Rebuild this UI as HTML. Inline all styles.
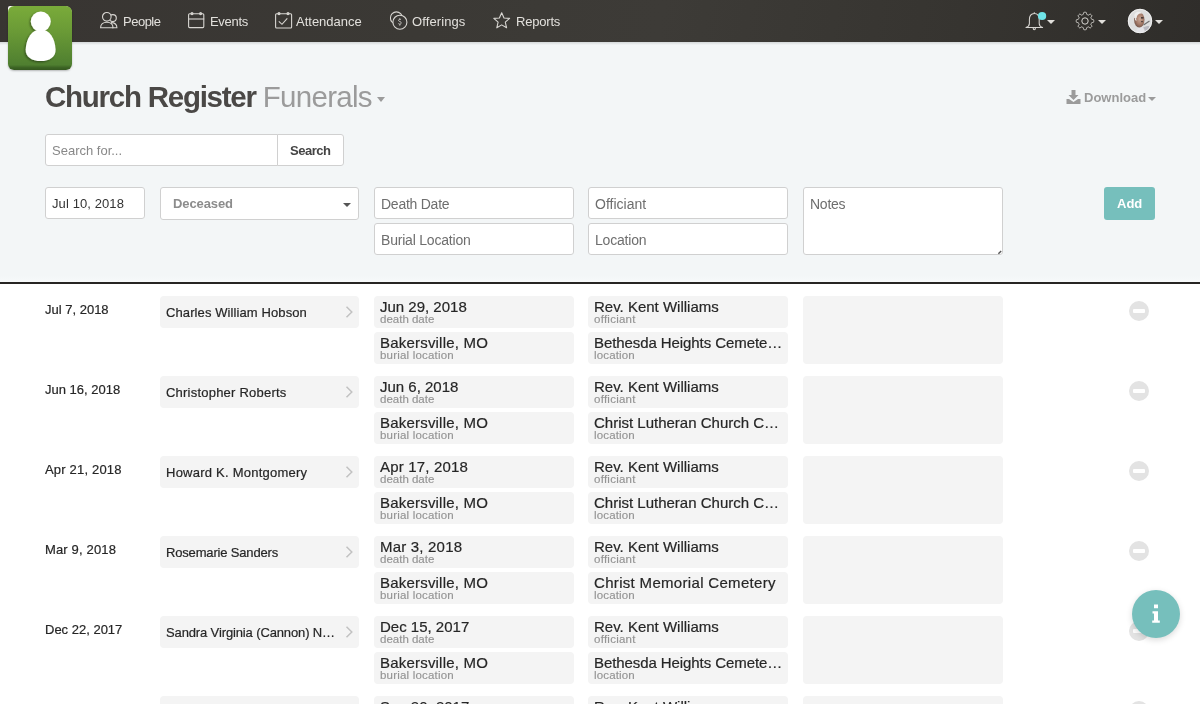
<!DOCTYPE html>
<html><head><meta charset="utf-8">
<style>
*{box-sizing:border-box;margin:0;padding:0}
body *{will-change:transform}
html,body{width:1200px;height:704px;overflow:hidden;background:#fff;font-family:"Liberation Sans",sans-serif;color:#333}
#nav{position:absolute;left:0;top:0;width:1200px;height:42px;background:linear-gradient(100deg,#383532 0%,#3b3935 35%,#3d3b37 55%,#363430 80%,#2f2d2a 100%)}
#navshadow{position:absolute;left:0;top:42px;width:1200px;height:3px;background:linear-gradient(#d3d7d8,#f3f6f7)}
#head{position:absolute;left:0;top:42px;width:1200px;height:240px;background:linear-gradient(#f3f6f7 0,#f3f6f7 234px,#f7f9fa 240px)}
#rule{position:absolute;left:0;top:282px;width:1200px;height:2px;background:#272523}
#logo{position:absolute;left:8px;top:6px;width:64px;height:64px;border-radius:6px;background:linear-gradient(#7aab3a 0%,#6a9a36 40%,#4f7f30 92%,#3c6424 96%,#34581f 100%);box-shadow:0 1px 2px rgba(0,0,0,.25)}
.nav-item{position:absolute;top:0;height:42px;font-size:13px;color:#e2e0dc;white-space:nowrap}
.nav-item svg{position:absolute}
.nav-item span{position:absolute;top:14px}
.title{position:absolute;left:45px;top:80px;font-size:29.5px;letter-spacing:-1.25px;font-weight:bold;color:#4a4846;white-space:nowrap;line-height:34px}
.title span{font-weight:normal;color:#9b9b9b;letter-spacing:-0.7px}
.inp{position:absolute;background:#fff;border:1px solid #d0d0d0;border-radius:3px;font-size:14px;color:#6e6e6e;padding-left:7px;white-space:nowrap}
.inp span{position:absolute;top:8px;left:6px}
.btn{position:absolute;background:#fff;border:1px solid #d0d0d0;font-size:14px;font-weight:bold;color:#444;white-space:nowrap}
.box{position:absolute;background:#f4f4f4;border-radius:4px;white-space:nowrap;overflow:hidden}
.box .v{position:absolute;left:6px;top:1.5px;font-size:15px;color:#262626;-webkit-text-stroke:0.2px #262626}
.box .l{position:absolute;left:6px;top:17px;font-size:11.5px;color:#939393;-webkit-text-stroke:0.15px #939393}
.date{position:absolute;left:45px;font-size:13px;color:#262626;margin-top:6px;-webkit-text-stroke:0.2px #262626}
.name{position:absolute;left:160px;width:199px;height:32px;background:#f4f4f4;border-radius:4px;font-size:13px;color:#333;white-space:nowrap}
.name .nt{position:absolute;left:6px;top:8.5px;color:#262626;-webkit-text-stroke:0.2px #262626}
.name svg{position:absolute;left:345px;top:10px;margin-left:-160px}
.minus{position:absolute;left:1129px;width:20px;height:20px;border-radius:50%;background:#e3e3e3}
.minus:after{content:"";position:absolute;left:4px;top:8px;width:12px;height:4px;background:#fff;border-radius:1px}
#info{position:absolute;left:1132px;top:590px;width:48px;height:48px;border-radius:50%;background:#76bfbc;box-shadow:0 2px 6px rgba(0,0,0,.15)}
.caret{position:absolute;width:0;height:0;border-left:4px solid transparent;border-right:4px solid transparent;border-top:4px solid #e2e0dc}
</style></head><body>
<div id="head"></div>
<div id="navshadow"></div>
<div id="nav"></div>
<div id="rule"></div>
<div style="position:absolute;left:8px;top:6px;width:64px;height:64px;border-radius:2px 7px 2px 7px;background:#fff"></div>
<div id="logo">
<svg width="64" height="64" viewBox="0 0 64 64" style="position:absolute;left:0;top:0">
<defs><filter id="fs" x="-20%" y="-20%" width="140%" height="140%"><feGaussianBlur in="SourceAlpha" stdDeviation="0.8"/><feOffset dx="-0.6" dy="0.8"/><feComponentTransfer><feFuncA type="linear" slope="0.45"/></feComponentTransfer><feMerge><feMergeNode/><feMergeNode in="SourceGraphic"/></feMerge></filter></defs>
<g filter="url(#fs)" fill="#fff">
<circle cx="32.8" cy="15.6" r="10"/>
<path d="M32.7 23.4 C24 23.4 18.2 32 17.7 43.5 C17.4 51 24 55.1 32.7 55.1 C41.5 55.1 47.9 51 47.6 43.5 C47.1 32 41.5 23.4 32.7 23.4Z"/>
</g>
</svg>
</div>

<div class="nav-item" style="left:100px">
<svg width="18" height="17" viewBox="0 0 18 17" style="left:0;top:12px"><g stroke="#d8d6d2" stroke-width="1.1"><circle cx="12.8" cy="6.1" r="3.5" fill="none"/><path d="M11 10.6 C14.8 10.6 16.9 12.4 16.9 15.7 H12" fill="none"/><circle cx="6.8" cy="4.8" r="4.3" fill="#3a3835"/><path d="M0.6 15.7 C0.6 12.2 3 10.2 6.8 10.2 C10.6 10.2 13 12.2 13 15.7 Z" fill="#3a3835"/></g></svg>
<span style="left:23px;letter-spacing:-0.5px">People</span></div>

<div class="nav-item" style="left:188px">
<svg width="18" height="17" viewBox="0 0 18 17" style="left:0;top:12px"><g fill="none" stroke="#d8d6d2" stroke-width="1.1"><rect x="0.6" y="1.8" width="15.2" height="13.8" rx="1"/><path d="M0.6 7 H16.2"/><circle cx="4" cy="1.6" r="1"/><circle cx="12.6" cy="1.6" r="1"/></g></svg>
<span style="left:22px;letter-spacing:-0.3px">Events</span></div>

<div class="nav-item" style="left:275px">
<svg width="18" height="17" viewBox="0 0 18 17" style="left:0;top:12px"><g fill="none" stroke="#d8d6d2" stroke-width="1.1"><rect x="0.6" y="1.8" width="16" height="14.2" rx="1"/><circle cx="4" cy="1.6" r="1"/><circle cx="13" cy="1.6" r="1"/><path d="M3.8 9.3 L7 12.3 L12.3 6.3"/></g></svg>
<span style="left:21px">Attendance</span></div>

<div class="nav-item" style="left:390px">
<svg width="19" height="20" viewBox="0 0 19 20" style="left:0;top:11px"><g stroke="#d8d6d2" stroke-width="1.1"><circle cx="6.4" cy="6.9" r="6" fill="none"/><circle cx="9.9" cy="11.2" r="7" fill="#3a3835"/></g><path d="M11 8.8 C10.6 8.2 9 8 8.6 9 C8.3 9.9 9.3 10.4 10 10.6 C10.9 10.9 11.5 11.5 11.1 12.5 C10.7 13.4 9 13.3 8.4 12.6 M9.8 7.3 V8.3 M9.8 13.3 V14.6" fill="none" stroke="#d8d6d2" stroke-width="0.9"/></svg>
<span style="left:22px;letter-spacing:0.1px">Offerings</span></div>

<div class="nav-item" style="left:493px">
<svg width="18" height="17" viewBox="0 0 18 17" style="left:0;top:12px"><path d="M8.7 0.8 L11 6 L16.6 6.4 L12.3 10.2 L13.6 15.8 L8.7 12.9 L3.8 15.8 L5.1 10.2 L0.8 6.4 L6.4 6Z" fill="none" stroke="#d8d6d2" stroke-width="1.1" stroke-linejoin="round"/></svg>
<span style="left:23px;letter-spacing:-0.2px">Reports</span></div>

<!-- right icons -->
<svg width="24" height="22" viewBox="0 0 24 22" style="position:absolute;left:1025px;top:11px"><g fill="none" stroke="#d8d6d2" stroke-width="1.05" stroke-linejoin="round"><path d="M9.3 2.4 C6 2.4 4.4 5 4.4 8.6 V12.6 C4.4 14.6 3 15.8 1 16.5 H17.6 C15.6 15.8 14.2 14.6 14.2 12.6 V8.6 C14.2 5 12.6 2.4 9.3 2.4Z M9.3 2.4 V1.2"/><circle cx="9.3" cy="17.6" r="1.1"/></g><circle cx="17.1" cy="5" r="4.1" fill="#6fe4e8"/></svg>
<div class="caret" style="left:1047px;top:20px"></div>
<svg width="20" height="20" viewBox="0 0 20 20" style="position:absolute;left:1075.3px;top:10.7px"><g fill="none" stroke="#d8d6d2" stroke-width="1.0"><circle cx="10" cy="10" r="3.2"/><path d="M10.00 1.25 L10.23 1.25 L10.46 1.27 L10.69 1.29 L10.91 1.33 L11.13 1.41 L11.33 1.62 L11.47 2.08 L11.55 2.72 L11.64 3.18 L11.77 3.39 L11.93 3.50 L12.09 3.57 L12.25 3.63 L12.42 3.70 L12.58 3.76 L12.75 3.83 L12.91 3.90 L13.07 3.98 L13.24 4.04 L13.42 4.08 L13.67 4.02 L14.05 3.76 L14.56 3.36 L14.99 3.14 L15.27 3.13 L15.49 3.22 L15.68 3.35 L15.85 3.50 L16.02 3.65 L16.19 3.81 L16.35 3.98 L16.50 4.15 L16.65 4.32 L16.78 4.51 L16.87 4.73 L16.86 5.01 L16.64 5.44 L16.24 5.95 L15.98 6.33 L15.92 6.58 L15.96 6.76 L16.02 6.93 L16.10 7.09 L16.17 7.25 L16.24 7.42 L16.30 7.58 L16.37 7.75 L16.43 7.91 L16.50 8.07 L16.61 8.23 L16.82 8.36 L17.28 8.45 L17.92 8.53 L18.38 8.67 L18.59 8.87 L18.67 9.09 L18.71 9.31 L18.73 9.54 L18.75 9.77 L18.75 10.00 L18.75 10.23 L18.73 10.46 L18.71 10.69 L18.67 10.91 L18.59 11.13 L18.38 11.33 L17.92 11.47 L17.28 11.55 L16.82 11.64 L16.61 11.77 L16.50 11.93 L16.43 12.09 L16.37 12.25 L16.30 12.42 L16.24 12.58 L16.17 12.75 L16.10 12.91 L16.02 13.07 L15.96 13.24 L15.92 13.42 L15.98 13.67 L16.24 14.05 L16.64 14.56 L16.86 14.99 L16.87 15.27 L16.78 15.49 L16.65 15.68 L16.50 15.85 L16.35 16.02 L16.19 16.19 L16.02 16.35 L15.85 16.50 L15.68 16.65 L15.49 16.78 L15.27 16.87 L14.99 16.86 L14.56 16.64 L14.05 16.24 L13.67 15.98 L13.42 15.92 L13.24 15.96 L13.07 16.02 L12.91 16.10 L12.75 16.17 L12.58 16.24 L12.42 16.30 L12.25 16.37 L12.09 16.43 L11.93 16.50 L11.77 16.61 L11.64 16.82 L11.55 17.28 L11.47 17.92 L11.33 18.38 L11.13 18.59 L10.91 18.67 L10.69 18.71 L10.46 18.73 L10.23 18.75 L10.00 18.75 L9.77 18.75 L9.54 18.73 L9.31 18.71 L9.09 18.67 L8.87 18.59 L8.67 18.38 L8.53 17.92 L8.45 17.28 L8.36 16.82 L8.23 16.61 L8.07 16.50 L7.91 16.43 L7.75 16.37 L7.58 16.30 L7.42 16.24 L7.25 16.17 L7.09 16.10 L6.93 16.02 L6.76 15.96 L6.58 15.92 L6.33 15.98 L5.95 16.24 L5.44 16.64 L5.01 16.86 L4.73 16.87 L4.51 16.78 L4.32 16.65 L4.15 16.50 L3.98 16.35 L3.81 16.19 L3.65 16.02 L3.50 15.85 L3.35 15.68 L3.22 15.49 L3.13 15.27 L3.14 14.99 L3.36 14.56 L3.76 14.05 L4.02 13.67 L4.08 13.42 L4.04 13.24 L3.98 13.07 L3.90 12.91 L3.83 12.75 L3.76 12.58 L3.70 12.42 L3.63 12.25 L3.57 12.09 L3.50 11.93 L3.39 11.77 L3.18 11.64 L2.72 11.55 L2.08 11.47 L1.62 11.33 L1.41 11.13 L1.33 10.91 L1.29 10.69 L1.27 10.46 L1.25 10.23 L1.25 10.00 L1.25 9.77 L1.27 9.54 L1.29 9.31 L1.33 9.09 L1.41 8.87 L1.62 8.67 L2.08 8.53 L2.72 8.45 L3.18 8.36 L3.39 8.23 L3.50 8.07 L3.57 7.91 L3.63 7.75 L3.70 7.58 L3.76 7.42 L3.83 7.25 L3.90 7.09 L3.98 6.93 L4.04 6.76 L4.08 6.58 L4.02 6.33 L3.76 5.95 L3.36 5.44 L3.14 5.01 L3.13 4.73 L3.22 4.51 L3.35 4.32 L3.50 4.15 L3.65 3.98 L3.81 3.81 L3.98 3.65 L4.15 3.50 L4.32 3.35 L4.51 3.22 L4.73 3.13 L5.01 3.14 L5.44 3.36 L5.95 3.76 L6.33 4.02 L6.58 4.08 L6.76 4.04 L6.93 3.98 L7.09 3.90 L7.25 3.83 L7.42 3.76 L7.58 3.70 L7.75 3.63 L7.91 3.57 L8.07 3.50 L8.23 3.39 L8.36 3.18 L8.45 2.72 L8.53 2.08 L8.67 1.62 L8.87 1.41 L9.09 1.33 L9.31 1.29 L9.54 1.27 L9.77 1.25Z" stroke-linejoin="round"/></g></svg>
<div class="caret" style="left:1098px;top:20px"></div>
<svg width="26" height="26" viewBox="0 0 26 26" style="position:absolute;left:1127px;top:8px">
<defs><clipPath id="avc"><circle cx="13" cy="13" r="11.6"/></clipPath>
<radialGradient id="fg" cx="0.55" cy="0.45" r="0.6"><stop offset="0" stop-color="#c9a999"/><stop offset="0.6" stop-color="#a47a68"/><stop offset="1" stop-color="#6e5248"/></radialGradient></defs>
<circle cx="13" cy="13" r="12" fill="#e6e6e6"/>
<g clip-path="url(#avc)">
<rect x="0" y="0" width="26" height="26" fill="#dedede"/>
<path d="M14 26 C14 20 17 18 22 18 L26 26Z" fill="#b9b9c0"/>
<path d="M9 26 C9 21 11 19 14 19 C17 19 18 22 18 26Z" fill="#e4e4e8"/>
<ellipse cx="12.3" cy="11.8" rx="5.2" ry="7.6" fill="url(#fg)"/>
<path d="M7.2 10 C7 5.5 9 3.8 12 3.8 C13.5 3.8 14.5 4.5 15 5.5 C12 5 10 6.5 9.5 10Z" fill="#eeeeee"/>
<path d="M8 12 C8 9 8.5 7 10 6 C9 8 9 10 9.5 13Z" fill="#e8e8e8"/>
<rect x="14" y="9" width="2.6" height="1.6" fill="#4a3a35"/>
<rect x="14" y="13" width="2" height="1.2" fill="#5a4a45"/>
<path d="M16.5 17 L22.5 13" stroke="#6d6d6d" stroke-width="1.1"/>
</g>
<circle cx="13" cy="13" r="11.8" fill="none" stroke="#f0f0f0" stroke-width="0.9"/>
</svg>
<div class="caret" style="left:1155px;top:20px"></div>

<div class="title">Church Register <span>Funerals</span></div>
<div class="caret" style="left:377px;top:97px;border-left-width:4.5px;border-right-width:4.5px;border-top:5px solid #9b9b9b"></div>

<!-- download -->
<svg width="15" height="14" viewBox="0 0 15 14" style="position:absolute;left:1066px;top:90px"><path d="M5.5 0 H9.5 V5 H12.5 L7.5 10 L2.5 5 H5.5Z M0.5 9 H3 L7.5 12 L12 9 H14.5 V14 H0.5Z" fill="#9b9b9b"/></svg>
<div style="position:absolute;left:1084px;top:90px;font-size:13px;font-weight:bold;color:#9b9b9b;white-space:nowrap">Download</div>
<div class="caret" style="left:1148px;top:97px;border-top-color:#9b9b9b"></div>

<!-- search -->
<div class="inp" style="left:45px;top:134px;width:233px;height:32px;border-radius:3px 0 0 3px;color:#888;font-size:13px"><span>Search for...</span></div>
<div class="btn" style="left:277px;top:134px;width:67px;height:32px;border-radius:0 3px 3px 0"><span style="position:absolute;left:12px;top:8px;font-size:13px;letter-spacing:-0.5px">Search</span></div>

<!-- form -->
<div class="inp" style="left:45px;top:187px;width:100px;height:32px;color:#333;font-size:13px"><span style="letter-spacing:0.1px">Jul 10, 2018</span></div>
<div class="inp" style="left:160px;top:187px;width:199px;height:33px;color:#8c8c8c;font-weight:bold"><span style="left:11.5px;font-size:13px;letter-spacing:-0.1px">Deceased</span><div class="caret" style="left:182px;top:15px;border-top-color:#555"></div></div>
<div class="inp" style="left:374px;top:187px;width:200px;height:32px"><span style="letter-spacing:-0.25px">Death Date</span></div>
<div class="inp" style="left:374px;top:223px;width:200px;height:32px"><span style="letter-spacing:-0.2px">Burial Location</span></div>
<div class="inp" style="left:588px;top:187px;width:200px;height:32px"><span>Officiant</span></div>
<div class="inp" style="left:588px;top:223px;width:200px;height:32px"><span style="letter-spacing:-0.2px">Location</span></div>
<div class="inp" style="left:803px;top:187px;width:200px;height:68px"><span style="letter-spacing:-0.25px">Notes</span>
<svg width="6" height="6" viewBox="0 0 6 6" style="position:absolute;left:193px;top:62px"><path d="M4.2 1 L1.4 3.8" stroke="#555" stroke-width="1.4"/></svg></div>
<div style="position:absolute;left:1104px;top:187px;width:51px;height:33px;background:#76bfbc;border-radius:3px;font-size:13px;font-weight:bold;color:#fff"><span style="position:absolute;left:13px;top:9px">Add</span></div>

<div class="date" style="top:296px"><span>Jul 7, 2018</span></div>
<div class="name" style="top:296px"><span class="nt" style="letter-spacing:0.1px">Charles William Hobson</span><svg width="8" height="12" viewBox="0 0 8 12"><path d="M1.5 0.8 L6.8 6 L1.5 11.2" fill="none" stroke="#c2c2c2" stroke-width="1.5"/></svg></div>
<div class="box" style="left:374px;top:296px;width:200px;height:32px"><div class="v">Jun 29, 2018</div><div class="l">death date</div></div>
<div class="box" style="left:374px;top:332px;width:200px;height:32px"><div class="v" style="letter-spacing:0.2px">Bakersville, MO</div><div class="l" style="letter-spacing:0.2px">burial location</div></div>
<div class="box" style="left:588px;top:296px;width:200px;height:32px"><div class="v">Rev. Kent Williams</div><div class="l" style="letter-spacing:0.25px">officiant</div></div>
<div class="box" style="left:588px;top:332px;width:200px;height:32px"><div class="v" style="letter-spacing:-0.08px">Bethesda Heights Cemete…</div><div class="l" style="letter-spacing:0.15px">location</div></div>
<div class="box" style="left:803px;top:296px;width:200px;height:68px"></div>
<div class="minus" style="top:301px"></div>
<div class="date" style="top:376px"><span>Jun 16, 2018</span></div>
<div class="name" style="top:376px"><span class="nt" style="letter-spacing:0.22px">Christopher Roberts</span><svg width="8" height="12" viewBox="0 0 8 12"><path d="M1.5 0.8 L6.8 6 L1.5 11.2" fill="none" stroke="#c2c2c2" stroke-width="1.5"/></svg></div>
<div class="box" style="left:374px;top:376px;width:200px;height:32px"><div class="v">Jun 6, 2018</div><div class="l">death date</div></div>
<div class="box" style="left:374px;top:412px;width:200px;height:32px"><div class="v" style="letter-spacing:0.2px">Bakersville, MO</div><div class="l" style="letter-spacing:0.2px">burial location</div></div>
<div class="box" style="left:588px;top:376px;width:200px;height:32px"><div class="v">Rev. Kent Williams</div><div class="l" style="letter-spacing:0.25px">officiant</div></div>
<div class="box" style="left:588px;top:412px;width:200px;height:32px"><div class="v">Christ Lutheran Church C…</div><div class="l" style="letter-spacing:0.15px">location</div></div>
<div class="box" style="left:803px;top:376px;width:200px;height:68px"></div>
<div class="minus" style="top:381px"></div>
<div class="date" style="top:456px"><span style="letter-spacing:0.18px">Apr 21, 2018</span></div>
<div class="name" style="top:456px"><span class="nt" style="letter-spacing:0.24px">Howard K. Montgomery</span><svg width="8" height="12" viewBox="0 0 8 12"><path d="M1.5 0.8 L6.8 6 L1.5 11.2" fill="none" stroke="#c2c2c2" stroke-width="1.5"/></svg></div>
<div class="box" style="left:374px;top:456px;width:200px;height:32px"><div class="v" style="letter-spacing:0.17px">Apr 17, 2018</div><div class="l">death date</div></div>
<div class="box" style="left:374px;top:492px;width:200px;height:32px"><div class="v" style="letter-spacing:0.2px">Bakersville, MO</div><div class="l" style="letter-spacing:0.2px">burial location</div></div>
<div class="box" style="left:588px;top:456px;width:200px;height:32px"><div class="v">Rev. Kent Williams</div><div class="l" style="letter-spacing:0.25px">officiant</div></div>
<div class="box" style="left:588px;top:492px;width:200px;height:32px"><div class="v">Christ Lutheran Church C…</div><div class="l" style="letter-spacing:0.15px">location</div></div>
<div class="box" style="left:803px;top:456px;width:200px;height:68px"></div>
<div class="minus" style="top:461px"></div>
<div class="date" style="top:536px"><span style="letter-spacing:0.15px">Mar 9, 2018</span></div>
<div class="name" style="top:536px"><span class="nt" style="letter-spacing:-0.17px">Rosemarie Sanders</span><svg width="8" height="12" viewBox="0 0 8 12"><path d="M1.5 0.8 L6.8 6 L1.5 11.2" fill="none" stroke="#c2c2c2" stroke-width="1.5"/></svg></div>
<div class="box" style="left:374px;top:536px;width:200px;height:32px"><div class="v" style="letter-spacing:0.2px">Mar 3, 2018</div><div class="l">death date</div></div>
<div class="box" style="left:374px;top:572px;width:200px;height:32px"><div class="v" style="letter-spacing:0.2px">Bakersville, MO</div><div class="l" style="letter-spacing:0.2px">burial location</div></div>
<div class="box" style="left:588px;top:536px;width:200px;height:32px"><div class="v">Rev. Kent Williams</div><div class="l" style="letter-spacing:0.25px">officiant</div></div>
<div class="box" style="left:588px;top:572px;width:200px;height:32px"><div class="v" style="letter-spacing:0.32px">Christ Memorial Cemetery</div><div class="l" style="letter-spacing:0.15px">location</div></div>
<div class="box" style="left:803px;top:536px;width:200px;height:68px"></div>
<div class="minus" style="top:541px"></div>
<div class="date" style="top:616px"><span>Dec 22, 2017</span></div>
<div class="name" style="top:616px"><span class="nt" style="letter-spacing:-0.13px">Sandra Virginia (Cannon) N…</span><svg width="8" height="12" viewBox="0 0 8 12"><path d="M1.5 0.8 L6.8 6 L1.5 11.2" fill="none" stroke="#c2c2c2" stroke-width="1.5"/></svg></div>
<div class="box" style="left:374px;top:616px;width:200px;height:32px"><div class="v">Dec 15, 2017</div><div class="l">death date</div></div>
<div class="box" style="left:374px;top:652px;width:200px;height:32px"><div class="v" style="letter-spacing:0.2px">Bakersville, MO</div><div class="l" style="letter-spacing:0.2px">burial location</div></div>
<div class="box" style="left:588px;top:616px;width:200px;height:32px"><div class="v">Rev. Kent Williams</div><div class="l" style="letter-spacing:0.25px">officiant</div></div>
<div class="box" style="left:588px;top:652px;width:200px;height:32px"><div class="v" style="letter-spacing:-0.08px">Bethesda Heights Cemete…</div><div class="l" style="letter-spacing:0.15px">location</div></div>
<div class="box" style="left:803px;top:616px;width:200px;height:68px"></div>
<div class="minus" style="top:621px"></div>
<div class="date" style="top:696px"><span>Sep 18, 2017</span></div>
<div class="name" style="top:696px"><span class="nt">Robert L. Johnson</span><svg width="8" height="12" viewBox="0 0 8 12"><path d="M1.5 0.8 L6.8 6 L1.5 11.2" fill="none" stroke="#c2c2c2" stroke-width="1.5"/></svg></div>
<div class="box" style="left:374px;top:696px;width:200px;height:32px"><div class="v">Sep 20, 2017</div><div class="l">death date</div></div>
<div class="box" style="left:374px;top:732px;width:200px;height:32px"><div class="v" style="letter-spacing:0.2px">Bakersville, MO</div><div class="l" style="letter-spacing:0.2px">burial location</div></div>
<div class="box" style="left:588px;top:696px;width:200px;height:32px"><div class="v">Rev. Kent Williams</div><div class="l" style="letter-spacing:0.25px">officiant</div></div>
<div class="box" style="left:588px;top:732px;width:200px;height:32px"><div class="v" style="letter-spacing:-0.08px">Bethesda Heights Cemete…</div><div class="l" style="letter-spacing:0.15px">location</div></div>
<div class="box" style="left:803px;top:696px;width:200px;height:68px"></div>
<div class="minus" style="top:701px"></div>

<div id="info"><svg width="10" height="20" viewBox="0 0 10 20" style="position:absolute;left:19.2px;top:14px"><path d="M3 0.5 H7 V4.2 H3Z M1.5 7.2 H7 V16.6 H8.8 V18.8 H1.2 V16.6 H3 V9.4 H1.5Z" fill="#fff"/></svg></div>
</body></html>
